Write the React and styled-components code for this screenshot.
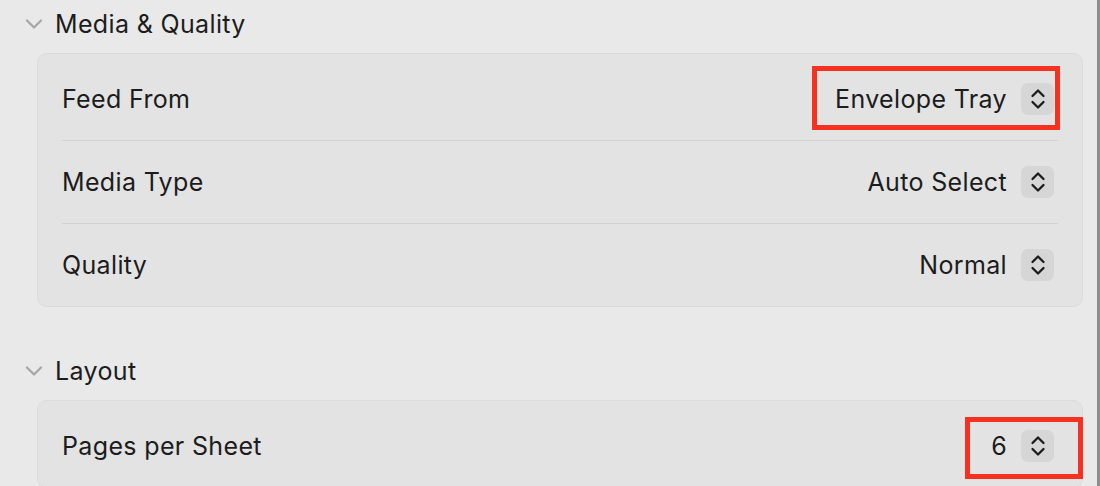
import React from 'react';
import styled, { createGlobalStyle } from 'styled-components';

const GlobalStyle = createGlobalStyle`
  html, body {
    margin: 0;
    padding: 0;
    background: #e9e9e9;
  }
  body {
    font-family: Inter, "Noto Sans", "Liberation Sans", sans-serif;
    color: #1c1c1c;
    -webkit-font-smoothing: antialiased;
  }
`;

const Window = styled.div`
  display: flex;
  width: 1100px;
  height: 486px;
  overflow: hidden;
  background: #e9e9e9;
`;

const Pane = styled.div`
  flex: 1;
  padding: 0 14px 0 25px;
`;

const Edge = styled.div`
  width: 3px;
  background: #8c8c8c;
`;

const Section = styled.section`
  & + & {
    margin-top: 40px;
  }
`;

const Header = styled.div`
  display: flex;
  align-items: center;
  height: 48px;
  gap: 12px;
`;

const HeaderTitle = styled.span`
  font-size: 25px;
  letter-spacing: 0.35px;
  color: #1c1c1c;
`;

const Card = styled.div`
  margin: 5px 0 0 12px;
  padding-top: 4px;
  background: #e3e3e3;
  border: 1px solid #dbdbdb;
  border-radius: 10px;
`;

const Row = styled.div`
  display: flex;
  align-items: center;
  justify-content: space-between;
  margin: 0 24px;
  border-bottom: 1px solid ${p => (p.$last ? 'transparent' : '#d2d2d2')};
  box-sizing: border-box;
  height: ${p => (p.$last ? 82 : 83)}px;
`;

const Label = styled.span`
  font-size: 25px;
  letter-spacing: 0.35px;
  color: #1c1c1c;
`;

const Control = styled.div`
  position: relative;
  display: flex;
  align-items: center;
  gap: 14px;
  margin-right: 4px;
  height: 32px;

  &::after {
    content: '';
    display: ${p => (p.$inset ? 'block' : 'none')};
    position: absolute;
    inset: ${p => p.$inset || '0'};
    border: 5px solid #f7311f;
    pointer-events: none;
  }
`;

const Value = styled.span`
  font-size: 25px;
  letter-spacing: 0.35px;
  color: #1c1c1c;
`;

const Stepper = styled.span`
  display: flex;
  align-items: center;
  justify-content: center;
  width: 33px;
  height: 32px;
  border-radius: 7px;
  background: #d6d6d6;
`;

const Chevron = () => (
  <svg width="18" height="10" viewBox="0 0 18 10">
    <path d="M2 1.5 L9 8.5 L16 1.5" fill="none" stroke="#a6a6a6" strokeWidth="2.2" strokeLinecap="round" strokeLinejoin="round" />
  </svg>
);

const UpDown = () => (
  <svg width="16" height="24" viewBox="0 0 16 24">
    <path d="M2.5 9 L8 3.5 L13.5 9 M2.5 15 L8 20.5 L13.5 15" fill="none" stroke="#1c1c1c" strokeWidth="2.3" strokeLinecap="round" strokeLinejoin="round" />
  </svg>
);

const sections = [
  {
    title: 'Media & Quality',
    rows: [
      { label: 'Feed From', value: 'Envelope Tray', inset: '-17px -6px -15px -23px' },
      { label: 'Media Type', value: 'Auto Select' },
      { label: 'Quality', value: 'Normal' },
    ],
  },
  {
    title: 'Layout',
    rows: [
      { label: 'Pages per Sheet', value: '6', inset: '-13px -29px -17px -26px' },
    ],
  },
];

export default function App() {
  return (
    <Window>
      <GlobalStyle />
      <Pane>
        {sections.map(section => (
          <Section key={section.title}>
            <Header>
              <Chevron />
              <HeaderTitle>{section.title}</HeaderTitle>
            </Header>
            <Card>
              {section.rows.map((row, i) => (
                <Row key={row.label} $last={i === section.rows.length - 1}>
                  <Label>{row.label}</Label>
                  <Control $inset={row.inset}>
                    <Value>{row.value}</Value>
                    <Stepper><UpDown /></Stepper>
                  </Control>
                </Row>
              ))}
            </Card>
          </Section>
        ))}
      </Pane>
      <Edge />
    </Window>
  );
}
